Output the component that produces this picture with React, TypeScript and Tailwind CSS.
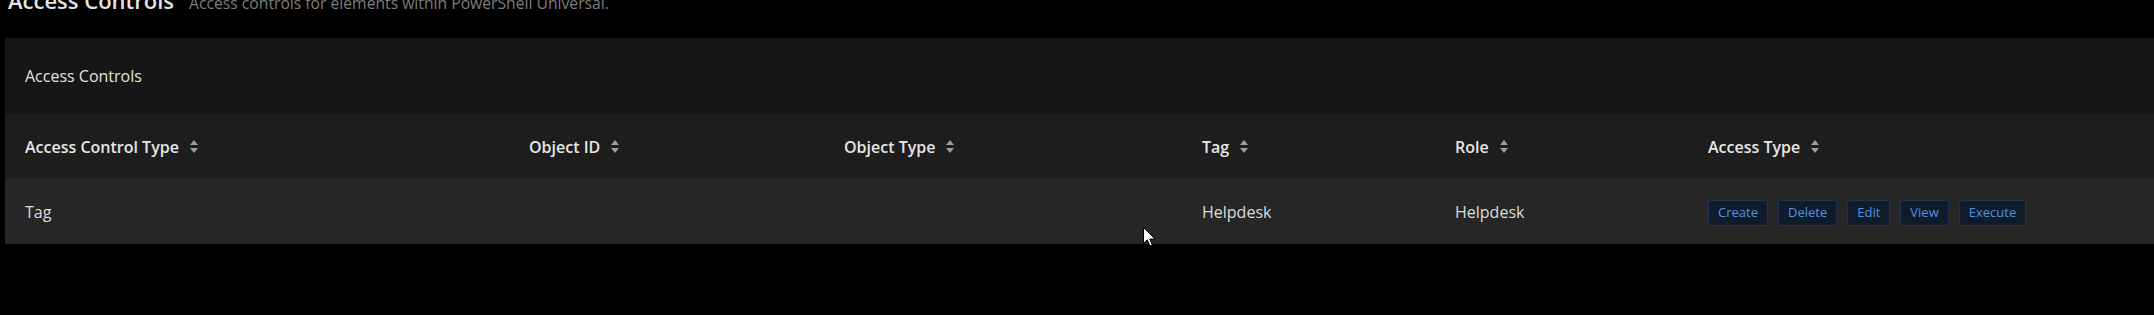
import React from "react";

const COLUMNS = ["Access Control Type", "Object ID", "Object Type", "Tag", "Role", "Access Type"];
const ACCESS = ["Create", "Delete", "Edit", "View", "Execute"];

function SortIcon() {
  return (
    <svg width="8" height="13" viewBox="0 0 8 13" className="shrink-0">
      <polygon points="4,0 8,5 0,5" fill="#9d9d9d" />
      <polygon points="0,8 8,8 4,13" fill="#9d9d9d" />
    </svg>
  );
}

function Cursor() {
  return (
    <svg width="13" height="21" viewBox="0 0 13 21" className="absolute left-[1143px] top-[227px]">
      <path d="M0.5 0.5 L0.5 16.5 L4.3 12.8 L6.9 19 L9.3 18 L6.8 12 L12 12 Z" fill="#ffffff" stroke="#000000" strokeWidth="1" strokeLinejoin="round" />
    </svg>
  );
}

export default function App() {
  return (
    <div className="relative w-[2154px] h-[315px] overflow-hidden bg-black font-['Open_Sans',sans-serif]">
      {/* page heading, cut off at the top */}
      <div className="flex items-baseline gap-[15px] pl-[8px] -mt-[15px] h-[30px]">
        <h1 className="text-[22px] leading-[30px] font-semibold text-[#e4e4e4]">Access Controls</h1>
        <p className="text-[15.7px] leading-[30px] text-[#7d7d7d]">
          Access controls for elements within PowerShell Universal.
        </p>
      </div>

      <div className="ml-[5px] mr-[-20px] mt-[23px]">
        <div className="h-[76px] flex items-center px-5 bg-[#161616] text-[16px] text-[#e2e2e2]">
          Access Controls
        </div>

        <div className="h-[65px] grid grid-cols-[504px_315px_358px_253px_253px_1fr] items-center px-5 bg-[#1d1d1d]">
          {COLUMNS.map((c) => (
            <div key={c} className="flex items-center gap-[11px] text-[16px] font-semibold text-[#e6e6e6]">
              {c}
              <SortIcon />
            </div>
          ))}
        </div>

        <div className="h-[65px] grid grid-cols-[504px_315px_358px_253px_253px_1fr] items-center px-5 pt-[1px] bg-[#262626] text-[16px] text-[#dcdcdc]">
          <div>Tag</div>
          <div></div>
          <div></div>
          <div>Helpdesk</div>
          <div>Helpdesk</div>
          <div className="flex items-center gap-[10px] pt-[2px]">
            {ACCESS.map((a) => (
              <span
                key={a}
                className="h-[26px] flex items-center px-[9px] rounded-[3px] border border-[#1d3350] bg-[#0f1b28] text-[13px] text-[#4f93e0]"
              >
                {a}
              </span>
            ))}
          </div>
        </div>
      </div>

      <Cursor />
    </div>
  );
}
